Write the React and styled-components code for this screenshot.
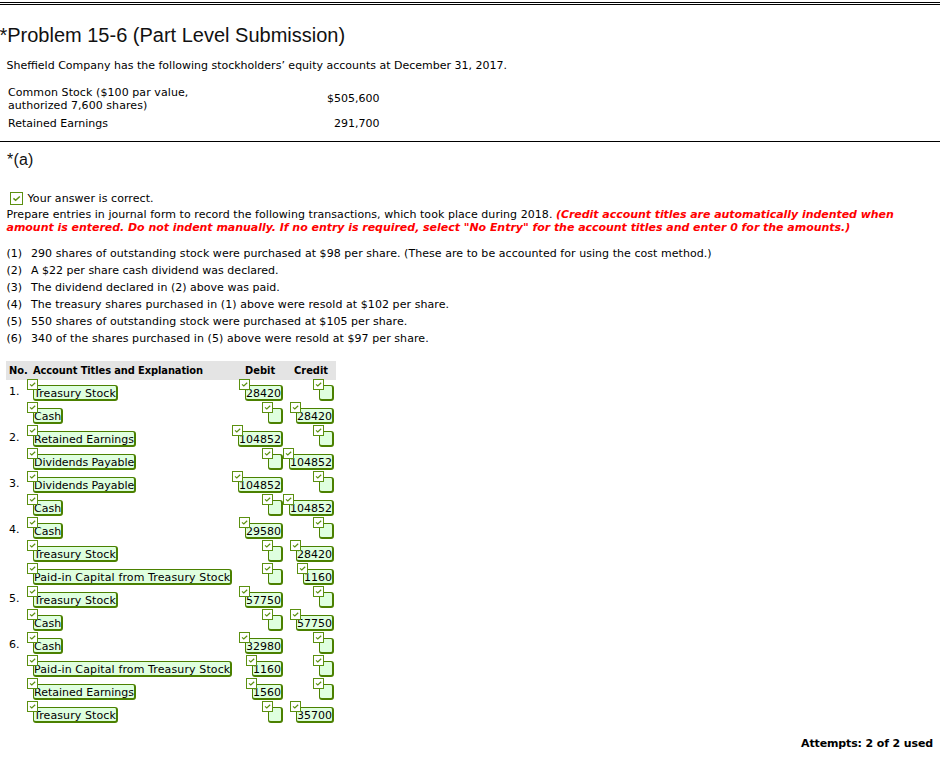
import styled, { createGlobalStyle, css } from "styled-components";

const GlobalStyle = createGlobalStyle`
  * {
    box-sizing: border-box;
  }

  body {
    margin: 0;
    background: #fff;
    color: #000;
    font-family: "DejaVu Sans", Verdana, sans-serif;
    font-size: 11px;
    line-height: 13px;
  }
`;

const Page = styled.main`
  width: 940px;
  height: 760px;
  padding-top: 2px;
  overflow: hidden;
  white-space: nowrap;
`;

const Title = styled.h1`
  height: 53px;
  margin: 0;
  padding-top: 18px;
  border-top: 3px double #000;
  color: #111;
  font-family: "Liberation Sans", Arial, sans-serif;
  font-size: 20px;
  font-weight: 400;
  line-height: 24px;
  text-indent: -0.6px;
`;

const Text = styled.span`
  letter-spacing: ${(props) => props.$track || 0}px;
`;

const Intro = styled.p`
  margin: 4px 0 0 6.5px;
`;

const Accounts = styled.dl`
  display: grid;
  grid-template-columns: 280px 91.5px;
  grid-template-rows: 26px 13px;
  row-gap: 5px;
  align-items: center;
  margin: 14px 0 0 8px;
`;

const AccountName = styled.dt``;

const AccountAmount = styled.dd`
  margin: 0;
  padding-bottom: ${(props) => props.$lift || 0}px;
  text-align: right;
`;

const Part = styled.section`
  margin-top: 11px;
  border-top: 1px solid #000;
`;

const PartTitle = styled.h2`
  margin: 8px 0 0 7px;
  color: #111;
  font-family: "Liberation Sans", Arial, sans-serif;
  font-size: 16px;
  font-weight: 400;
  line-height: 20px;
  letter-spacing: 0.2px;
`;

const Verdict = styled.div`
  display: flex;
  gap: 4.5px;
  height: 16px;
  margin: 22px 0 0 10px;
`;

const Instructions = styled.p`
  margin: 0 0 0 6.5px;
`;

const Warning = styled(Text)`
  color: #f00;
  font-weight: 700;
  font-style: italic;
`;

const Transactions = styled.ol`
  margin: 11px 0 0 6.5px;
  padding: 0;
  list-style: none;
`;

const Transaction = styled.li`
  display: grid;
  grid-template-columns: 24.5px 1fr;
  height: 17px;
  line-height: 17px;
`;

const rowColumns = css`
  display: grid;
  grid-template-columns: 27px 199px 51px 51px;
`;

const Journal = styled.div`
  width: 330px;
  margin: 14px 0 0 6px;
`;

const JournalHead = styled.div`
  ${rowColumns}
  height: 19px;
  background: #e4e4e4;
  font-family: "DejaVu Sans Condensed", "DejaVu Sans", sans-serif;
  font-stretch: condensed;
  font-weight: 700;
  line-height: 19px;
`;

const HeadCell = styled.div`
  padding-left: ${(props) => props.$indent || 0}px;
  letter-spacing: ${(props) => props.$track || 0}px;
`;

const JournalRow = styled.div`
  ${rowColumns}
  height: 23px;
  padding-top: 5px;
`;

const EntryNo = styled.div`
  padding-left: 3px;
`;

const AmountCell = styled.div`
  display: flex;
  justify-content: flex-end;
`;

const Answer = styled.div`
  position: relative;
  width: ${(props) => props.$width}px;
  height: 16px;
  border: solid #4b8000;
  border-width: 1px 2px 2px 1px;
  border-radius: 3px;
  background: #dfffdf;
  line-height: 16px;
  letter-spacing: ${(props) => props.$track || 0}px;
`;

const Badge = styled.span`
  position: ${(props) => (props.$pinned ? "absolute" : "static")};
  top: -7px;
  left: -7px;
  flex: none;
  width: ${(props) => props.$size}px;
  height: ${(props) => props.$size}px;
  border: 1px solid #5b9010;
  background: #fff;

  svg {
    display: block;
    width: 100%;
    height: 100%;
  }
`;

const Attempts = styled.footer`
  margin: 12px 7px 0 0;
  font-weight: 700;
  text-align: right;
`;

const titles = {
  treasury: { label: "Treasury Stock", width: 85, track: 0.1 },
  cash: { label: "Cash", width: 30, track: 0 },
  retained: { label: "Retained Earnings", width: 103, track: 0 },
  dividends: { label: "Dividends Payable", width: 103, track: -0.05 },
  paidIn: {
    label: "Paid-in Capital from Treasury Stock",
    width: 199,
    track: 0.12,
  },
};

const entries = [
  { no: "1.", title: "treasury", debit: "28420" },
  { title: "cash", credit: "28420" },
  { no: "2.", title: "retained", debit: "104852" },
  { title: "dividends", credit: "104852" },
  { no: "3.", title: "dividends", debit: "104852" },
  { title: "cash", credit: "104852" },
  { no: "4.", title: "cash", debit: "29580" },
  { title: "treasury", credit: "28420" },
  { title: "paidIn", credit: "1160" },
  { no: "5.", title: "treasury", debit: "57750" },
  { title: "cash", credit: "57750" },
  { no: "6.", title: "cash", debit: "32980" },
  { title: "paidIn", debit: "1160" },
  { title: "retained", debit: "1560" },
  { title: "treasury", credit: "35700" },
];

const transactions = [
  {
    text: "290 shares of outstanding stock were purchased at $98 per share. (These are to be accounted for using the cost method.)",
    track: 0.05,
  },
  { text: "A $22 per share cash dividend was declared.", track: 0.01 },
  { text: "The dividend declared in (2) above was paid.", track: 0.02 },
  {
    text: "The treasury shares purchased in (1) above were resold at $102 per share.",
    track: 0.07,
  },
  {
    text: "550 shares of outstanding stock were purchased at $105 per share.",
    track: 0.045,
  },
  {
    text: "340 of the shares purchased in (5) above were resold at $97 per share.",
    track: 0.07,
  },
];

function CheckBadge({ size = 11, pinned = false }) {
  return (
    <Badge $size={size} $pinned={pinned}>
      <svg viewBox="0 0 9 9" fill="none" stroke="#5b9010" strokeWidth="1.2">
        <path d="M2 4.4 L3.8 6 L7.2 2.8" />
      </svg>
    </Badge>
  );
}

function Amount({ value = "" }) {
  return (
    <AmountCell>
      <Answer $width={value ? value.length * 7 + 3 : 15}>
        {value}
        <CheckBadge pinned />
      </Answer>
    </AmountCell>
  );
}

function Entry({ entry }) {
  const title = titles[entry.title];

  return (
    <JournalRow>
      <EntryNo>{entry.no}</EntryNo>
      <div>
        <Answer $width={title.width} $track={title.track}>
          {title.label}
          <CheckBadge pinned />
        </Answer>
      </div>
      <Amount value={entry.debit} />
      <Amount value={entry.credit} />
    </JournalRow>
  );
}

export default function App() {
  return (
    <>
      <GlobalStyle />
      <Page>
        <Title>*Problem 15-6 (Part Level Submission)</Title>
        <Intro>
          <Text>
            Sheffield Company has the following stockholders’ equity accounts at
            December 31, 2017.
          </Text>
        </Intro>
        <Accounts>
          <AccountName>
            <Text $track={0.08}>Common Stock ($100 par value,</Text>
            <br />
            <Text $track={0.06}>authorized 7,600 shares)</Text>
          </AccountName>
          <AccountAmount $lift={2}>$505,600</AccountAmount>
          <AccountName>
            <Text>Retained Earnings</Text>
          </AccountName>
          <AccountAmount>291,700</AccountAmount>
        </Accounts>

        <Part>
          <PartTitle>*(a)</PartTitle>
          <Verdict>
            <CheckBadge size={13} />
            <Text $track={0.07}>Your answer is correct.</Text>
          </Verdict>
          <Instructions>
            <Text $track={0.053}>
              Prepare entries in journal form to record the following
              transactions, which took place during 2018.{" "}
            </Text>
            <Warning $track={-0.05}>
              (Credit account titles are automatically indented when
            </Warning>
            <br />
            <Warning $track={-0.033}>
              amount is entered. Do not indent manually. If no entry is
              required, select "No Entry" for the account titles and enter 0 for
              the amounts.)
            </Warning>
          </Instructions>
          <Transactions>
            {transactions.map((item, i) => (
              <Transaction key={item.text}>
                <span>({i + 1})</span>
                <Text $track={item.track}>{item.text}</Text>
              </Transaction>
            ))}
          </Transactions>

          <Journal>
            <JournalHead>
              <HeadCell $indent={3}>No.</HeadCell>
              <HeadCell $track={-0.1}>Account Titles and Explanation</HeadCell>
              <HeadCell $indent={13}>Debit</HeadCell>
              <HeadCell $indent={11}>Credit</HeadCell>
            </JournalHead>
            {entries.map((entry, i) => (
              <Entry key={i} entry={entry} />
            ))}
          </Journal>
        </Part>
        <Attempts>
          <Text $track={-0.13}>Attempts: 2 of 2 used</Text>
        </Attempts>
      </Page>
    </>
  );
}
